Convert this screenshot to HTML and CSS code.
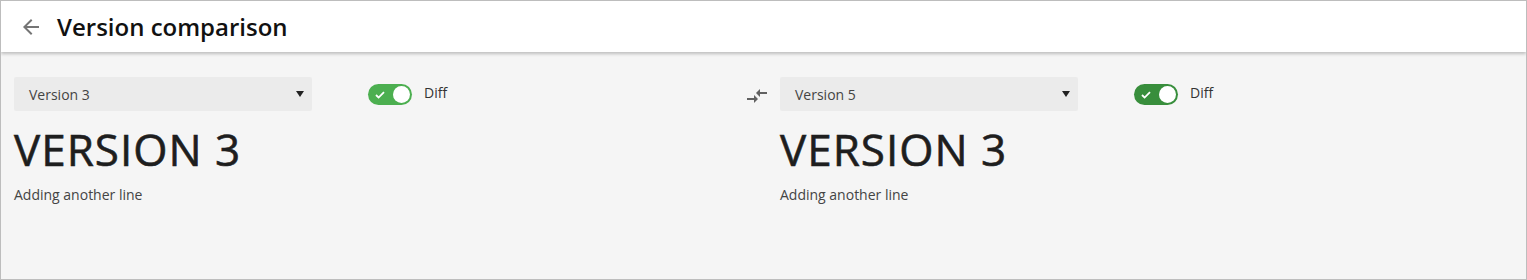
FILE: index.html
```html
<!DOCTYPE html>
<html lang="en">
<head>
    <meta charset="UTF-8">
    <meta name="viewport" content="width=device-width, initial-scale=1.0">
    <title>Version comparison</title>
    <link rel="stylesheet" href="styles.css">
</head>
<body>
<div class="frame">
    <div class="top">
        <button class="back" aria-label="Back">
            <svg width="24" height="24" viewBox="0 0 24 24"><path fill="#757575" d="M20 11H7.83l5.59-5.59L12 4l-8 8 8 8 1.41-1.41L7.83 13H20v-2z"/></svg>
        </button>
        <h2>Version comparison</h2>
    </div>

    <div class="compare">
        <div class="pane">
            <div class="toolbar">
                <div class="select">
                    <span>Version 3</span>
                    <svg class="caret" width="8" height="6" viewBox="0 0 8 6"><path fill="#222" d="M0 0h8L4 6z"/></svg>
                </div>
                <div class="toggle">
                    <span class="switch">
                        <svg class="check" width="10" height="8" viewBox="0 0 10 8"><path fill="none" stroke="#fff" stroke-width="1.8" d="M1 4l2.6 2.6L9 1.2"/></svg>
                        <span class="knob"></span>
                    </span>
                    <span class="label">Diff</span>
                </div>
            </div>
            <h1>VERSION 3</h1>
            <p>Adding another line</p>
        </div>

        <div class="swap">
            <svg width="24" height="24" viewBox="0 0 24 24"><path fill="#616161" d="M9.01 14H2v2h7.01v3L13 15l-3.99-4v3zm5.98-1v-3H22V8h-7.01V5L11 9l3.99 4z"/></svg>
        </div>

        <div class="pane">
            <div class="toolbar">
                <div class="select">
                    <span>Version 5</span>
                    <svg class="caret" width="8" height="6" viewBox="0 0 8 6"><path fill="#222" d="M0 0h8L4 6z"/></svg>
                </div>
                <div class="toggle dark">
                    <span class="switch">
                        <svg class="check" width="10" height="8" viewBox="0 0 10 8"><path fill="none" stroke="#fff" stroke-width="1.8" d="M1 4l2.6 2.6L9 1.2"/></svg>
                        <span class="knob"></span>
                    </span>
                    <span class="label">Diff</span>
                </div>
            </div>
            <h1>VERSION 3</h1>
            <p>Adding another line</p>
        </div>
    </div>
</div>
</body>
</html>
```

FILE: styles.css
```css
html, body {
    margin: 0;
    height: 100%;
}

body {
    font-family: "Open Sans", Arial, sans-serif;
    color: #212121;
}

.frame {
    box-sizing: border-box;
    height: 280px;
    border: 1px solid #bdbdbd;
    background-color: #f5f5f5;
    overflow: hidden;
}

.top {
    display: flex;
    align-items: center;
    height: 51px;
    background-color: #fff;
    box-shadow: 0 2px 3px rgba(0, 0, 0, 0.22);
    position: relative;
}

.back {
    display: flex;
    border: none;
    background: none;
    padding: 0;
    margin: 0 14px 0 18px;
    cursor: pointer;
}

.top h2 {
    margin: 0;
    font-size: 24px;
    font-weight: 600;
    color: #111;
    padding-bottom: 1px;
}

.compare {
    display: grid;
    grid-template-columns: 731px 35px 1fr;
    padding: 25px 0 0 13px;
}

.toolbar {
    display: flex;
    align-items: center;
    height: 34px;
}

.select {
    box-sizing: border-box;
    width: 298px;
    height: 34px;
    padding: 0 8px 0 15px;
    display: flex;
    align-items: center;
    justify-content: space-between;
    background-color: #ebebeb;
    border-radius: 2px;
    font-size: 14px;
    color: #444;
}

.toggle {
    display: flex;
    align-items: flex-start;
    margin-left: 56px;
    height: 34px;
    padding-top: 7px;
    box-sizing: border-box;
}

.switch {
    box-sizing: border-box;
    width: 44px;
    height: 21px;
    border-radius: 11px;
    background-color: #4caf50;
    display: flex;
    align-items: center;
    justify-content: space-between;
    padding: 0 2px 0 7px;
}

.dark .switch {
    background-color: #388e3c;
}

.knob {
    width: 17px;
    height: 17px;
    border-radius: 50%;
    background-color: #fff;
}

.label {
    margin-left: 12px;
    font-size: 14px;
    line-height: 18px;
    color: #333;
}

.swap {
    display: flex;
    align-items: center;
    height: 34px;
    padding-top: 4px;
    box-sizing: border-box;
}

h1 {
    margin: 8px 0 0;
    font-size: 44px;
    font-weight: 400;
    line-height: 60px;
    letter-spacing: 1px;
    color: #1e1e1e;
    -webkit-text-stroke: 0.6px #1e1e1e; /* ref heading is a touch heavier than regular */
}

p {
    margin: 6px 0 0;
    font-size: 14px;
    color: #444;
}
```
